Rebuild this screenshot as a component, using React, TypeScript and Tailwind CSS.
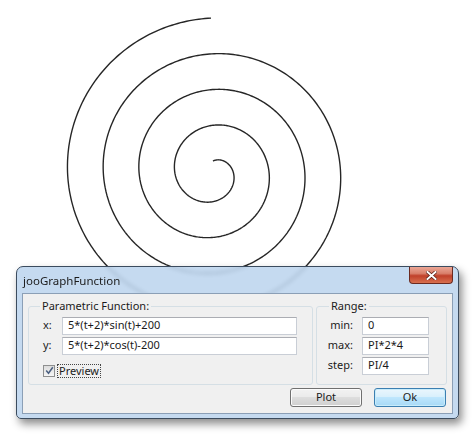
import * as React from 'react';

const FONT = { fontFamily: '"Noto Sans", "Open Sans", Arial, sans-serif' };

/* ========================= spiral ========================= */
function spiralPath() {
  // x = 5*(t+2)*sin(t)+200, y = 5*(t+2)*cos(t)-200, t = 0 .. PI*2*4
  const cx = 213;
  const cy = 172.4;
  const s = 1.138;
  const pts: string[] = [];
  const max = Math.PI * 2 * 4;
  for (let t = 0; t <= max + 0.0001; t += 0.02) {
    const r = 5 * (t + 2) * s;
    pts.push(`${(cx + r * Math.sin(t)).toFixed(2)},${(cy - r * Math.cos(t)).toFixed(2)}`);
  }
  return 'M' + pts.join(' L');
}

function Spiral() {
  const d = React.useMemo(spiralPath, []);
  return (
    <svg width={474} height={266} className="block overflow-visible">
      <path d={d} fill="none" stroke="#262626" strokeWidth={1.4} />
    </svg>
  );
}

/* ========================= bits ========================= */
function TextBox({ value, className = '' }: { value: string; className?: string }) {
  return (
    <div
      className={
        'h-[18px] bg-white border border-[#c9ced6] border-t-[#abadb3] flex items-center pl-[5px] text-[11px] text-[#1a1a1a] ' +
        className
      }
    >
      {value}
    </div>
  );
}

function Button({ label, primary }: { label: string; primary?: boolean }) {
  return (
    <div
      className={
        'w-[72px] h-[19px] rounded-[3px] border flex items-center justify-center text-[11px] text-[#1a1a1a] ' +
        (primary
          ? 'border-[#3c7fb1] bg-[linear-gradient(#eaf6fd_0%,#d9f0fc_45%,#bee6fd_50%,#a7d9f5_100%)] shadow-[inset_0_0_0_1px_#c8ecfb]'
          : 'border-[#707070] bg-[linear-gradient(#f2f2f2_0%,#ebebeb_45%,#dddddd_50%,#cfcfcf_100%)] shadow-[inset_0_0_0_1px_#fbfbfb]')
      }
    >
      {label}
    </div>
  );
}

function CloseButton() {
  return (
    <div className="w-[44px] h-[17px] rounded-b-[4px] border border-t-0 border-[#6b2a20] bg-[linear-gradient(#eba695_0%,#d9806b_40%,#c0402a_55%,#d8704f_100%)] flex items-center justify-center">
      <svg width={11} height={9} viewBox="0 0 11 9">
        <path d="M1.5 1 L9.5 8 M9.5 1 L1.5 8" stroke="#5a1d14" strokeWidth={3.4} strokeLinecap="square" />
        <path d="M1.5 1 L9.5 8 M9.5 1 L1.5 8" stroke="#ffffff" strokeWidth={2} strokeLinecap="square" />
      </svg>
    </div>
  );
}

function Check() {
  return (
    <div className="w-[12px] h-[12px] border border-[#8e8f8f] bg-[linear-gradient(#dcdcdc,#f6f6f6)] flex items-center justify-center">
      <svg width={9} height={9} viewBox="0 0 9 9">
        <path d="M1.2 4.6 L3.5 7.2 L7.8 1.2" fill="none" stroke="#4a5f80" strokeWidth={1.5} />
      </svg>
    </div>
  );
}

/* ========================= dialog ========================= */
function Dialog() {
  return (
    <div className="relative ml-[16px] w-[443px] h-[153px] rounded-t-[7px] rounded-b-[5px] border border-[#3b4b5e] bg-[#b7d1ec]/80 backdrop-blur-[2px] shadow-[3px_5px_9px_rgba(0,0,0,0.45)] px-[5px] pb-[4px] flex flex-col">
      <div className="h-[26px] flex items-start justify-between pl-[1px]">
        <div className="text-[11.5px] text-[#1b1b1b] mt-[5px]">jooGraphFunction</div>
        <CloseButton />
      </div>

      <div className="flex-1 border border-[#8b9fb6] bg-[#f0f0f0] pt-[4px] px-[5px] flex flex-col">
        <div className="flex gap-[3px]">
          <fieldset className="w-[285px] h-[87px] border border-[#d5dfe5] rounded-[3px] px-[14px]">
            <legend className="text-[11px] text-[#1b1b1b] ml-[-3px] px-[2px]">Parametric Function:</legend>
            <div className="flex items-center mt-[2px]">
              <span className="w-[19px] text-[11px] text-[#1b1b1b]">x:</span>
              <TextBox value="5*(t+2)*sin(t)+200" className="w-[235px]" />
            </div>
            <div className="flex items-center mt-[2px]">
              <span className="w-[19px] text-[11px] text-[#1b1b1b]">y:</span>
              <TextBox value="5*(t+2)*cos(t)-200" className="w-[235px]" />
            </div>
            <div className="flex items-center mt-[10px] gap-[3px]">
              <Check />
              <span className="text-[11px] text-[#1b1b1b] leading-[12px] px-[1px] outline outline-1 outline-dotted outline-[#444]">
                Preview
              </span>
            </div>
          </fieldset>

          <fieldset className="w-[131px] h-[87px] border border-[#d5dfe5] rounded-[3px] pl-[10px]">
            <legend className="text-[11px] text-[#1b1b1b] ml-[2px] px-[2px]">Range:</legend>
            {[
              ['min:', '0'],
              ['max:', 'PI*2*4'],
              ['step:', 'PI/4'],
            ].map(([l, v]) => (
              <div key={l} className="flex items-center mt-[2px]">
                <span className="w-[26px] text-right text-[11px] text-[#1b1b1b]">{l}</span>
                <TextBox value={v} className="ml-[9px] w-[67px]" />
              </div>
            ))}
          </fieldset>
        </div>

        <div className="flex justify-end gap-[12px] mt-[3px] pr-[1px]">
          <Button label="Plot" />
          <Button label="Ok" primary />
        </div>
      </div>
    </div>
  );
}

export default function App() {
  return (
    <div className="w-[474px] h-[438px] bg-white overflow-hidden" style={FONT}>
      <Spiral />
      <Dialog />
    </div>
  );
}
